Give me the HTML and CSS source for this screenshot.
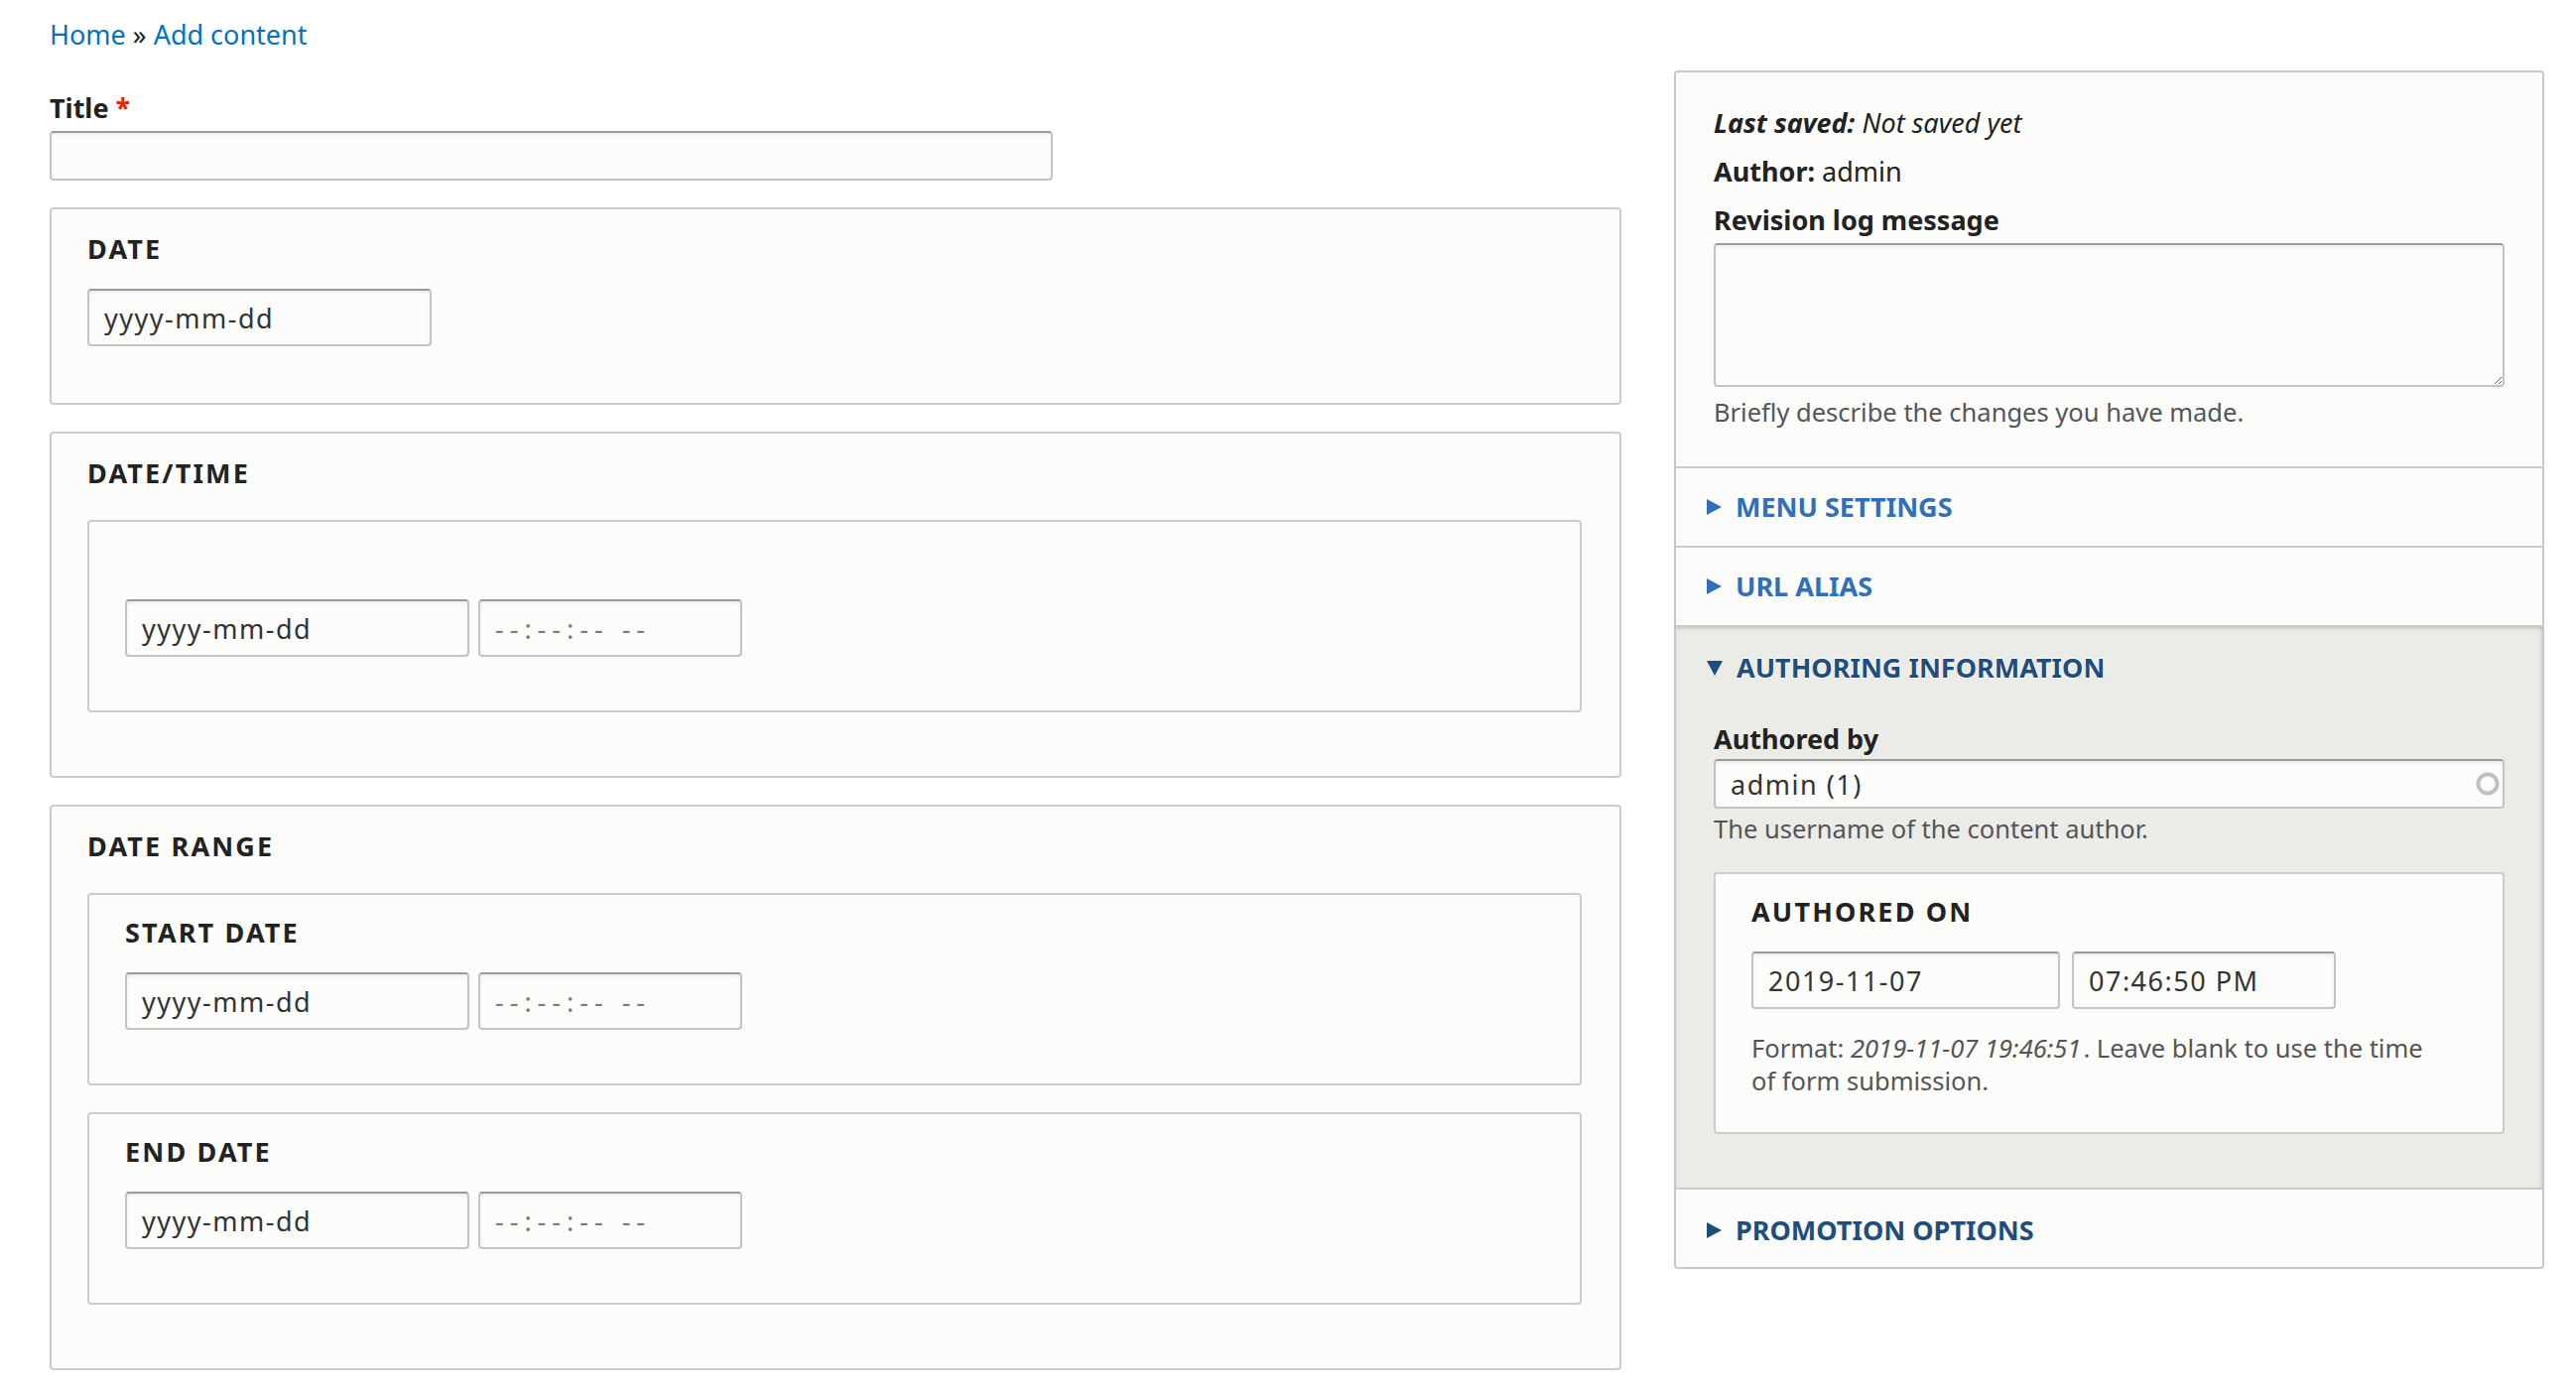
FILE: index.html
```html
<!DOCTYPE html>
<html lang="en">
<head>
  <meta charset="UTF-8">
  <meta name="viewport" content="width=device-width, initial-scale=1.0">
  <title>Create Event</title>
  <link rel="stylesheet" href="styles.css">
</head>
<body>

  <div class="breadcrumb">
    <a href="#">Home</a> » <a href="#">Add content</a>
  </div>

  <form class="node-form">

    <div class="region-main">
      <div class="form-item title-item">
        <label class="form-label">Title <span class="required">*</span></label>
        <input class="form-text title-input" type="text">
      </div>

      <div class="fieldset">
        <div class="legend">Date</div>
        <div class="form-item">
          <input class="form-text date-input" type="text" placeholder="yyyy-mm-dd">
        </div>
      </div>

      <div class="fieldset">
        <div class="legend">Date/Time</div>
        <div class="fieldset">
          <div class="legend"></div>
          <div class="form-item datetime">
            <input class="form-text date-input" type="text" placeholder="yyyy-mm-dd">
            <input class="form-text time-input" type="text" placeholder="--:--:-- --">
          </div>
        </div>
      </div>

      <div class="fieldset">
        <div class="legend">Date range</div>
        <div class="fieldset">
          <div class="legend">Start date</div>
          <div class="form-item datetime">
            <input class="form-text date-input" type="text" placeholder="yyyy-mm-dd">
            <input class="form-text time-input" type="text" placeholder="--:--:-- --">
          </div>
        </div>
        <div class="fieldset">
          <div class="legend">End date</div>
          <div class="form-item datetime">
            <input class="form-text date-input" type="text" placeholder="yyyy-mm-dd">
            <input class="form-text time-input" type="text" placeholder="--:--:-- --">
          </div>
        </div>
      </div>
    </div>

    <div class="region-meta">
      <div class="meta-header">
        <p class="meta-item"><em><b>Last saved:</b> Not saved yet</em></p>
        <p class="meta-item"><b>Author:</b> admin</p>
        <div class="form-item">
          <label class="form-label">Revision log message</label>
          <textarea class="form-textarea"></textarea>
          <div class="description">Briefly describe the changes you have made.</div>
        </div>
      </div>

      <div class="details">
        <div class="summary">Menu settings</div>
      </div>
      <div class="details">
        <div class="summary">URL alias</div>
      </div>
      <div class="details open">
        <div class="summary">Authoring information</div>
        <div class="details-content">
          <div class="form-item">
            <label class="form-label">Authored by</label>
            <input class="form-text autocomplete" type="text" value="admin (1)">
            <div class="description">The username of the content author.</div>
          </div>
          <div class="fieldset">
            <div class="legend">Authored on</div>
            <div class="form-item has-description">
              <div class="datetime-row">
                <input class="form-text date-input short" type="text" value="2019-11-07">
                <input class="form-text time-input" type="text" value="07:46:50 PM">
              </div>
              <div class="description">Format: <em>2019-11-07 19:46:51</em>. Leave blank to use the time of form submission.</div>
            </div>
          </div>
        </div>
      </div>
      <div class="details last">
        <div class="summary visited">Promotion options</div>
      </div>
    </div>

  </form>

</body>
</html>
```

FILE: styles.css
```css
* {
  box-sizing: border-box;
}

body {
  margin: 0;
  padding: 0 32px 0 50px;
  font-family: "Noto Sans", "DejaVu Sans", sans-serif;
  font-size: 27px;
  line-height: 40px;
  color: #222;
  background: #fff;
}

a {
  color: #0074bd;
  text-decoration: none;
}

p {
  margin: 0;
}

.breadcrumb {
  margin-top: 15px;
}

.node-form {
  display: grid;
  grid-template-columns: 1584px 877px;
  column-gap: 53px;
  align-items: start;
  margin-top: 16px;
}

.region-main {
  padding-top: 18px;
}

.form-label {
  display: block;
  font-weight: bold;
  margin-bottom: 3px;
}

.required {
  color: #e32700;
}

.form-text,
.form-textarea {
  display: block;
  height: 58px;
  padding: 0 15px;
  border: 2px solid #c4c4c4;
  border-top-color: #9a9a9a;
  border-radius: 4px;
  background: #fcfcfa;
  box-shadow: inset 0 2px 3px rgba(0, 0, 0, 0.07);
  font-family: "Noto Sans", "DejaVu Sans", sans-serif;
  font-size: 27px;
  letter-spacing: 1.5px;
  color: #333;
}

.form-text::placeholder {
  color: #333;
  opacity: 1;
}

.title-input {
  width: 1011px;
  height: 50px;
}

.date-input {
  width: 347px;
}

.date-input.short {
  width: 311px;
}

.time-input {
  width: 266px;
}

.time-input::placeholder {
  color: #7a7a7a;
  letter-spacing: 6px;
}

.datetime {
  display: flex;
  gap: 9px;
}

.datetime-row {
  display: flex;
  gap: 12px;
}

.fieldset {
  margin: 27px 0;
  padding: 20px 38px 37px 36px;
  border: 2px solid #ccc;
  border-radius: 4px;
  background: #fcfcfa;
}

.fieldset .fieldset {
  padding-top: 18px;
  padding-bottom: 34px;
}

.legend {
  height: 40px;
  font-weight: bold;
  text-transform: uppercase;
  letter-spacing: 0.08em;
}

.fieldset .form-item {
  margin: 20px 0;
}

.fieldset .form-item.has-description {
  margin-bottom: 0;
}

.description {
  margin-top: 9px;
  font-size: 25.5px;
  line-height: 33px;
  color: #555;
}

.description em {
  padding-right: 2px;
}

/* sidebar */

.region-meta {
  border: 2px solid #c8c8c8;
  border-radius: 4px;
  background: #fcfcfa;
}

.meta-header {
  padding: 31px 38px 38px;
}

.meta-item {
  margin-bottom: 9px;
}

.form-textarea {
  width: 100%;
  height: 145px;
  padding: 10px 15px;
  resize: vertical;
}

.details {
  border-top: 2px solid #ccc;
}

.summary {
  display: flex;
  align-items: center;
  gap: 14px;
  padding: 19px 38px 19px 31px;
  font-weight: bold;
  text-transform: uppercase;
  color: #2f70b8;
}

.summary::before {
  content: "";
  border-left: 15px solid currentColor;
  border-top: 8px solid transparent;
  border-bottom: 8px solid transparent;
}

.summary.visited {
  color: #1f4d7c;
}

.details.last .summary {
  padding-top: 21px;
  padding-bottom: 17px;
}

.details.open {
  background: #ebebe7;
  box-shadow: inset 0 3px 4px -2px rgba(0, 0, 0, 0.18), inset -3px 0 4px -2px rgba(0, 0, 0, 0.12);
}

.details.open .summary {
  padding-top: 21px;
  color: #1f4d7c;
  text-shadow: 0 1px 0 #fff, 0 -1px 0 #fff, 1px 0 0 #fff;
}

.details.open .summary::before {
  border-top: 15px solid currentColor;
  border-left: 8px solid transparent;
  border-right: 8px solid transparent;
  border-bottom: 0;
}

.details-content {
  padding: 13px 38px 27px;
}

.details-content .form-label {
  margin-bottom: 0;
}

.details-content .form-text.autocomplete {
  width: 100%;
  height: 50px;
  background: radial-gradient(circle at calc(100% - 15px) 50%, transparent 7px, #c0c0c0 8px, #c0c0c0 11px, transparent 12px), #fcfcfa;
}

.details-content .fieldset {
  padding: 18px 70px 35px 36px;
}

.details-content .description {
  margin-top: 4px;
}

.details-content .fieldset .description {
  margin-top: 23px;
}
```
